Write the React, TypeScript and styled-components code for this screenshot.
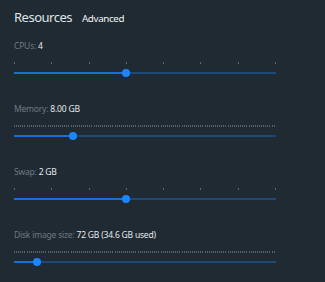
import styled, { createGlobalStyle } from "styled-components";

const Global = createGlobalStyle`
    html, body {
        margin: 0;
        background-color: #1f2a33;
    }
    body {
        font-family: "Noto Sans", "Open Sans", sans-serif;
    }
`;

const Panel = styled.div`
    width: 325px;
    height: 282px;
    box-sizing: border-box;
    padding: 8px 0 0 14px;
    background-color: #1f2a33;
    overflow: hidden;
`;

const Header = styled.div`
    display: flex;
    align-items: baseline;
    gap: 10px;
    height: 20px;
`;

const Title = styled.h1`
    margin: 0;
    font-size: 13px;
    letter-spacing: -0.5px;
    font-weight: 400;
    color: #dfe4e8;
`;

const Tab = styled.span`
    font-size: 9.8px;
    letter-spacing: -0.35px;
    color: #f2f4f6;
`;

const Section = styled.div`
    width: 262px;
    margin-top: ${(p: { $first?: boolean }) => (p.$first ? "12px" : "29px")};
`;

const Label = styled.div`
    font-size: 8.5px;
    letter-spacing: -0.2px;
    line-height: 12px;
    color: #6e7a84;

    b {
        font-weight: 400;
        color: #e6e9ec;
    }
`;

const Ticks = styled.div`
    display: flex;
    justify-content: space-between;
    height: 2px;
    margin-top: 10px;
`;

const Tick = styled.span<{ $dense?: boolean }>`
    width: 1px;
    height: 2px;
    background-color: ${(p) => (p.$dense ? "#57626c" : "#5f6a75")};
`;

const Track = styled.div`
    position: relative;
    height: 2px;
    margin-top: 8px;
    background-color: #1c4a78;
`;

const Fill = styled.div`
    height: 100%;
    background-color: #1a6fd6;
`;

const Thumb = styled.div`
    position: absolute;
    top: 50%;
    width: 8px;
    height: 8px;
    margin: -4px 0 0 -4px;
    border-radius: 50%;
    background-color: #1a86ff;
`;

type SliderProps = {
    label: string;
    value: string;
    ticks: number;
    fraction: number;
    first?: boolean;
};

const Slider = ({ label, value, ticks, fraction, first }: SliderProps) => {
    const dense = ticks > 20;
    const pct = `${fraction * 100}%`;
    return (
        <Section $first={first}>
            <Label>
                {label}: <b>{value}</b>
            </Label>
            <Ticks>
                {Array.from({ length: ticks }).map((_, i) => (
                    <Tick key={i} $dense={dense} />
                ))}
            </Ticks>
            <Track>
                <Fill style={{ width: pct }} />
                <Thumb style={{ left: pct }} />
            </Track>
        </Section>
    );
};

export default function App() {
    return (
        <>
            <Global />
            <Panel>
                <Header>
                    <Title>Resources</Title>
                    <Tab>Advanced</Tab>
                </Header>
                <Slider label="CPUs" value="4" ticks={8} fraction={3 / 7} first />
                <Slider label="Memory" value="8.00 GB" ticks={125} fraction={7 / 31} />
                <Slider label="Swap" value="2 GB" ticks={8} fraction={3 / 7} />
                <Slider label="Disk image size" value="72 GB (34.6 GB used)" ticks={125} fraction={0.088} />
            </Panel>
        </>
    );
}
